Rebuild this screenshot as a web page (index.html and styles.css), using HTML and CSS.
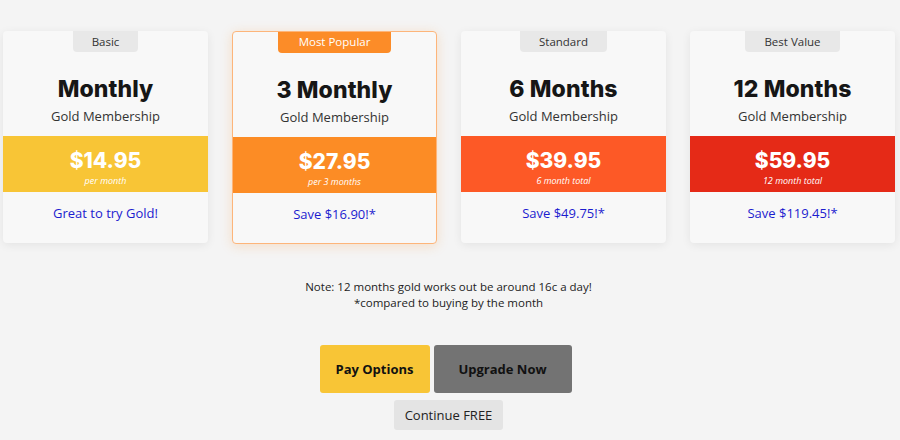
FILE: index.html
```html
<!DOCTYPE html>
<html>
<head>
<meta charset="utf-8">
<link rel="stylesheet" href="styles.css">
</head>
<body>
<div class="page">
  <div class="plans">
    <div class="card">
      <div class="badge">Basic</div>
      <div class="title">Monthly</div>
      <div class="sub">Gold Membership</div>
      <div class="band band-yellow">
        <div class="price">$14.95</div>
        <div class="per">per month</div>
      </div>
      <div class="save">Great to try Gold!</div>
    </div>
    <div class="card card-popular">
      <div class="badge badge-orange">Most Popular</div>
      <div class="title">3 Monthly</div>
      <div class="sub">Gold Membership</div>
      <div class="band band-orange">
        <div class="price">$27.95</div>
        <div class="per">per 3 months</div>
      </div>
      <div class="save">Save $16.90!*</div>
    </div>
    <div class="card">
      <div class="badge">Standard</div>
      <div class="title">6 Months</div>
      <div class="sub">Gold Membership</div>
      <div class="band band-redorange">
        <div class="price">$39.95</div>
        <div class="per">6 month total</div>
      </div>
      <div class="save">Save $49.75!*</div>
    </div>
    <div class="card">
      <div class="badge">Best Value</div>
      <div class="title">12 Months</div>
      <div class="sub">Gold Membership</div>
      <div class="band band-red">
        <div class="price">$59.95</div>
        <div class="per">12 month total</div>
      </div>
      <div class="save">Save $119.45!*</div>
    </div>
  </div>
  <div class="note">
    <div>Note: 12 months gold works out be around 16c a day!</div>
    <div>*compared to buying by the month</div>
  </div>
  <div class="actions">
    <div class="btn-row">
      <button class="btn btn-pay">Pay Options</button>
      <button class="btn btn-upgrade">Upgrade Now</button>
    </div>
    <button class="btn btn-free">Continue FREE</button>
  </div>
</div>
</body>
</html>
```
FILE: styles.css
```css
* { box-sizing: border-box; }
html, body {
  margin: 0;
  padding: 0;
  background: #f4f4f4;
  font-family: "Open Sans", "Liberation Sans", sans-serif;
  color: #222;
}
.page {
  width: 897px;
  padding-top: 31px;
}
.plans {
  display: grid;
  grid-template-columns: repeat(4, 205px);
  column-gap: 24px;
  padding-left: 3px;
}
.card {
  height: 212px;
  background: #f8f8f8;
  border-radius: 4px;
  box-shadow: 0 2px 10px rgba(0, 0, 0, 0.07);
  display: flex;
  flex-direction: column;
  align-items: center;
  overflow: hidden;
}
.card-popular {
  height: 213px;
  border: 1px solid #fdb57a;
  box-shadow: 0 2px 12px rgba(252, 140, 36, 0.22);
}
.badge {
  height: 21px;
  line-height: 21px;
  padding: 0 19px;
  font-size: 11.5px;
  color: #333;
  background: #e8e8e8;
  border-radius: 0 0 4px 4px;
}
.card-popular .badge { margin-top: -1px; height: 22px; line-height: 22px; }
.badge-orange {
  background: #fc8c28;
  color: #fff;
  padding: 0 21px;
}
.title {
  margin-top: 23px;
  font-family: "Inter", "DejaVu Sans", sans-serif;
  font-weight: 800;
  font-size: 23px;
  line-height: 28px;
  color: #161616;
  letter-spacing: 0.1px;
}
.sub {
  margin-top: 3px;
  font-size: 13px;
  line-height: 20px;
  color: #333;
}
.band {
  margin-top: 10px;
  width: 100%;
  height: 56px;
  padding-top: 12px;
  text-align: center;
  color: #fff;
}
.band-yellow { background: #f8c536; }
.band-orange { background: #fc8c25; }
.band-redorange { background: #fd5926; }
.band-red { background: #e52a17; }
.price {
  font-family: "Inter", "DejaVu Sans", sans-serif;
  font-weight: 800;
  font-size: 21px;
  line-height: 26px;
}
.per {
  font-size: 9px;
  line-height: 14px;
  font-style: italic;
}
.save {
  margin-top: 11px;
  font-size: 13px;
  line-height: 20px;
  color: #1c1ccf;
}
.note {
  margin-top: 35px;
  text-align: center;
  font-size: 11.5px;
  line-height: 16px;
  color: #222;
}
.actions {
  margin-top: 34px;
  display: flex;
  flex-direction: column;
  align-items: center;
  gap: 7px;
}
.btn-row {
  display: flex;
  gap: 4px;
  margin-left: -6px;
}
.btn {
  border: none;
  border-radius: 3px;
  font-family: "Open Sans", "Liberation Sans", sans-serif;
  font-size: 13px;
  color: #111;
  padding: 0;
}
.btn-pay {
  width: 110px;
  height: 48px;
  background: #f8c536;
  font-weight: 700;
}
.btn-upgrade {
  width: 138px;
  height: 48px;
  background: #737373;
  font-weight: 700;
}
.btn-free {
  width: 109px;
  height: 30px;
  background: #e4e4e4;
  color: #222;
}
```
